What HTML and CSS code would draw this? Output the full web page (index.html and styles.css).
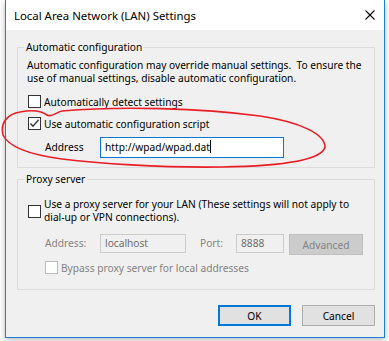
FILE: index.html
```html
<!DOCTYPE html>
<html lang="en">
<head>
    <meta charset="UTF-8">
    <meta name="viewport" content="width=device-width, initial-scale=1.0">
    <title>Local Area Network (LAN) Settings</title>
    <link rel="stylesheet" href="styles.css">
</head>
<body>
    <div class="window">
        <div class="titlebar">
            <span class="title">Local Area Network (LAN) Settings</span>
            <svg class="close" width="10" height="10" viewBox="0 0 10 10">
                <path d="M0.5 0.5L9.5 9.5M9.5 0.5L0.5 9.5" stroke="#000" stroke-width="1.1" fill="none"/>
            </svg>
        </div>

        <div class="content">
            <div class="group auto">
                <span class="legend">Automatic configuration</span>
                <p class="desc">Automatic configuration may override manual settings.&nbsp; To ensure the<br>use of manual settings, disable automatic configuration.</p>
                <label class="check-row detect"><span class="box"></span>Automatically detect settings</label>
                <label class="check-row script">
                    <span class="box">
                        <svg width="11" height="11" viewBox="0 0 11 11"><path d="M1.5 5.5L4 8.2L9.6 1.8" stroke="#333" stroke-width="1.3" fill="none"/></svg>
                    </span>Use automatic configuration script
                </label>
                <div class="field-row address">
                    <span class="field-label">Address</span>
                    <div class="textbox focused">http://wpad/wpad.dat<span class="caret"></span></div>
                </div>
            </div>

            <div class="group proxy">
                <span class="legend">Proxy server</span>
                <label class="check-row multi">
                    <span class="box"></span>
                    <span>Use a proxy server for your LAN (These settings will not apply to<br>dial-up or VPN connections).</span>
                </label>
                <div class="field-row disabled">
                    <span class="field-label">Address:</span>
                    <div class="textbox host">localhost</div>
                    <span class="field-label port-label">Port:</span>
                    <div class="textbox port">8888</div>
                    <button class="btn advanced" disabled>Advanced</button>
                </div>
                <label class="check-row bypass disabled"><span class="box"></span>Bypass proxy server for local addresses</label>
            </div>

            <div class="actions">
                <button class="btn default">OK</button>
                <button class="btn">Cancel</button>
            </div>
        </div>
    </div>

    <!-- red pen circle drawn over the screenshot -->
    <svg class="scribble" width="389" height="341" viewBox="0 0 389 341">
        <path d="M62 111 C120 106 200 108 260 116 C300 122 325 134 325 147 C322 160 282 166 222 167 C160 168 95 163 62 159 C32 155 9 148 3 135 C0 122 8 114 20 112 C30 110 40 110 47 115 C52 118 56 112 62 111"
              stroke="#ec1c24" stroke-width="1.6" fill="none" stroke-linecap="round"/>
    </svg>
</body>
</html>
```

FILE: styles.css
```css
* {
    box-sizing: border-box;
}
body {
    margin: 0;
    background: #fff;
    font-family: "Noto Sans", sans-serif;
    font-size: 10.2px;
    color: #000;
    position: relative;
    height: 341px;
    overflow: hidden;
    white-space: nowrap;
}
.window {
    margin-left: 5px;
    width: 380px;
    border: 1px solid #1a7fd5;
    border-top: none;
    box-shadow: 0 2px 6px rgba(0,0,0,0.28);
}
.titlebar {
    height: 30px;
    background: #fff;
    display: flex;
    align-items: center;
    justify-content: space-between;
    padding: 0 9px 0 8px;
}
.title {
    font-size: 11.4px;
}
.close {
    margin-top: -1px;
}
.content {
    background: #f0f0f0;
    padding: 17px 9px 11px 11px;
}
.group {
    border: 1px solid #dcdcdc;
    padding: 0 9px 9px 9px;
}
.group.proxy {
    margin-top: 11px;
    padding-bottom: 14px;
}
.legend {
    display: block;
    width: fit-content;
    margin: -8px 0 0 -3px;
    padding: 0 2px;
    line-height: 15px;
    background: #f0f0f0;
}
.desc {
    margin: 4px 0 0 0;
    line-height: 13px;
}
.check-row {
    display: flex;
    align-items: center;
    height: 15px;
    margin-left: 1px;
}
.check-row.detect {
    margin-top: 9px;
}
.check-row.script {
    margin-top: 7px;
}
.box {
    width: 13px;
    height: 13px;
    border: 1px solid #333;
    background: #fff;
    margin-right: 3px;
    flex-shrink: 0;
    display: flex;
    align-items: center;
    justify-content: center;
}
.check-row.multi {
    height: auto;
    line-height: 13px;
    margin-top: 11px;
}
.check-row.bypass {
    margin: 5px 0 0 18px;
}
.disabled {
    color: #838383;
}
.disabled .box {
    border-color: #bcbcbc;
}
.field-row {
    display: flex;
    align-items: center;
    margin-left: 18px;
}
.field-row.address {
    margin-top: 6px;
}
.field-row.disabled {
    margin-top: 10px;
    align-items: flex-start;
}
.field-label {
    width: 55px;
    line-height: 19px;
}
.port-label {
    width: 36px;
    margin-left: 14px;
}
.textbox {
    height: 19px;
    line-height: 17px;
    padding: 0 4px;
    border: 1px solid #ccc;
    background: #f0f0f0;
    color: #6d6d6d;
}
.textbox.focused {
    width: 184px;
    height: 21px;
    line-height: 19px;
    border-color: #0078d7;
    background: #fff;
    color: #000;
}
.caret {
    display: inline-block;
    width: 1px;
    height: 13px;
    background: #000;
    vertical-align: -2px;
}
.textbox.host {
    width: 86px;
}
.textbox.port {
    width: 48px;
}
.btn {
    font-family: inherit;
    font-size: 10.2px;
    height: 21px;
    width: 73px;
    padding: 0;
    border: 1px solid #adadad;
    background: #e1e1e1;
    color: #000;
}
.btn.advanced {
    width: 74px;
    margin-left: 5px;
    background: #ccc;
    border-color: #bfbfbf;
    color: #838383;
}
.btn.default {
    border: 2px solid #0078d7;
}
.actions {
    display: flex;
    justify-content: flex-end;
    gap: 11px;
    margin-top: 15px;
}
.scribble {
    position: absolute;
    left: 0;
    top: 0;
    pointer-events: none;
}
```
